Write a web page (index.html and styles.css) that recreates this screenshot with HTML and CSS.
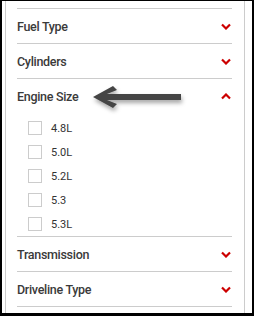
FILE: index.html
```html
<!DOCTYPE html>
<html>

<head>
    <title>Filters</title>
    <link rel="stylesheet" href="styles.css">
</head>

<body>
    <div class="frame">
        <div class="panel">
            <div class="filter">
                <div class="filter-head">
                    <span>Fuel Type</span>
                    <svg class="chev" width="10" height="7" viewBox="0 0 10 7"><path d="M1 1.5 L5 5.5 L9 1.5" /></svg>
                </div>
            </div>
            <div class="filter">
                <div class="filter-head">
                    <span>Cylinders</span>
                    <svg class="chev" width="10" height="7" viewBox="0 0 10 7"><path d="M1 1.5 L5 5.5 L9 1.5" /></svg>
                </div>
            </div>
            <div class="filter open">
                <div class="filter-head">
                    <span>Engine Size</span>
                    <svg class="chev" width="10" height="7" viewBox="0 0 10 7"><path d="M1 5.5 L5 1.5 L9 5.5" /></svg>
                </div>
                <ul class="options">
                    <li><span class="box"></span>4.8L</li>
                    <li><span class="box"></span>5.0L</li>
                    <li><span class="box"></span>5.2L</li>
                    <li><span class="box"></span>5.3</li>
                    <li><span class="box"></span>5.3L</li>
                </ul>
                <!-- callout arrow -->
                <svg class="pointer" width="104" height="40" viewBox="0 0 104 40">
                    <defs>
                        <filter id="shadow" x="-20%" y="-40%" width="140%" height="200%">
                            <feDropShadow dx="1" dy="3" stdDeviation="2" flood-color="#000" flood-opacity="0.35" />
                        </filter>
                    </defs>
                    <g filter="url(#shadow)" fill="#454545">
                        <polygon points="5,15 25,4 29,8 19,12 93,12 93,18 19,18 29,22 25,26" />
                    </g>
                </svg>
            </div>
            <div class="filter">
                <div class="filter-head">
                    <span>Transmission</span>
                    <svg class="chev" width="10" height="7" viewBox="0 0 10 7"><path d="M1 1.5 L5 5.5 L9 1.5" /></svg>
                </div>
            </div>
            <div class="filter">
                <div class="filter-head">
                    <span>Driveline Type</span>
                    <svg class="chev" width="10" height="7" viewBox="0 0 10 7"><path d="M1 1.5 L5 5.5 L9 1.5" /></svg>
                </div>
            </div>
            <div class="filter"></div>
        </div>
    </div>
</body>

</html>
```

FILE: styles.css
```css
html,
body {
    margin: 0;
    background: #000;
}

.frame {
    box-sizing: border-box;
    width: 254px;
    height: 316px;
    margin: 0;
    border-style: solid;
    border-color: #000;
    border-width: 1px 2px 3px 2px;
    background: #fff;
    padding: 0 7px 0 3px;
    overflow: hidden;
    font-family: Roboto, "Liberation Sans", sans-serif;
}

.panel {
    height: 100%;
    border-left: 1px solid #ccc;
    border-right: 1px solid #ccc;
    padding: 7px 12px 0 11px;
}

.filter {
    position: relative;
    border-top: 1px solid #ccc;
}

.filter-head {
    display: flex;
    align-items: center;
    justify-content: space-between;
    height: 34px;
    font-size: 12.5px;
    font-weight: 500;
    letter-spacing: -0.3px;
    color: #3a3a3a;
}

.filter-head span {
    padding-top: 1px;
}

.chev {
    margin-right: 1px;
}

.chev path {
    fill: none;
    stroke: #cc0000;
    stroke-width: 2.2;
}

.options {
    list-style: none;
    margin: 0;
    padding: 8px 0 5px 11px;
    display: flex;
    flex-direction: column;
    gap: 10px;
}

.options li {
    display: flex;
    align-items: center;
    height: 14px;
    font-size: 11px;
    color: #333;
}

.box {
    box-sizing: border-box;
    width: 14px;
    height: 14px;
    border: 1px solid #ccc;
    margin-right: 9px;
}

.pointer {
    position: absolute;
    left: 71px;
    top: 3px;
}
```
